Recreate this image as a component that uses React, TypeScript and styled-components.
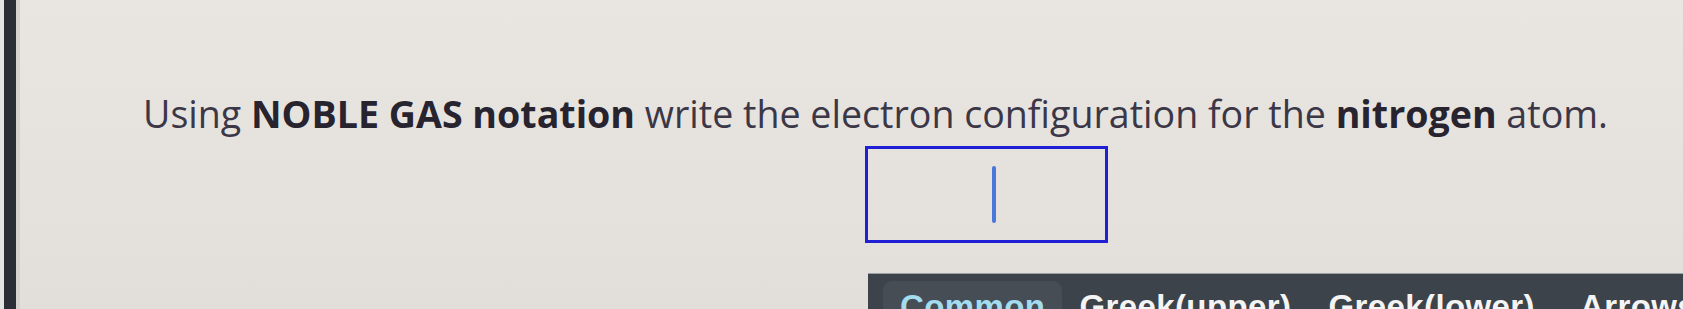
import React from "react";
import styled, { createGlobalStyle } from "styled-components";

const Global = createGlobalStyle`
  html, body { margin: 0; padding: 0; }
  body {
    width: 1683px;
    height: 309px;
    overflow: hidden;
    background: #e6e3df;
  }
`;

const Screen = styled.div`
  display: flex;
  width: 1683px;
  height: 309px;
  overflow: hidden;
`;

const Bezel = styled.div`
  flex: 0 0 20px;
  display: flex;
`;

const BezelEdge = styled.div<{ $w: number; $c: string }>`
  flex: 0 0 ${(p) => p.$w}px;
  background: ${(p) => p.$c};
`;

const Page = styled.main`
  flex: 1;
  display: flex;
  flex-direction: column;
  overflow: hidden;
  background: linear-gradient(180deg, #e9e6e2 0%, #e5e2de 60%, #e2dfdb 100%);
`;

const Question = styled.p`
  flex-shrink: 0;
  margin: 96px 0 0 123px;
  font-family: "Open Sans", "Noto Sans", sans-serif;
  font-size: 37.6px;
  line-height: 36px;
  color: #3b3747;
  white-space: nowrap;
`;

const Strong = styled.b`
  font-weight: 700;
  color: #27242f;
`;

const AnswerBox = styled.div`
  flex-shrink: 0;
  margin: 14px 0 0 845px;
  width: 243px;
  height: 97px;
  box-sizing: border-box;
  border: 3px solid #1f1fd6;
  display: flex;
  align-items: center;
  justify-content: center;
`;

const Caret = styled.div`
  width: 4px;
  height: 57px;
  border-radius: 2px;
  background: #4a78d8;
  margin-left: 14px;
`;

const Toolbar = styled.nav`
  flex-shrink: 0;
  margin: 30px 0 0 848px;
  height: 60px;
  background: #3d434a;
  border-top: 1px solid #9aa0a4;
  display: flex;
  align-items: flex-start;
  padding: 7px 0 0 15px;
`;

const Tab = styled.div<{ $active?: boolean; $gap?: number }>`
  flex-shrink: 0;
  padding: 8px 17px 0 17px;
  margin-right: ${(p) => p.$gap ?? 0}px;
  border-radius: 9px 9px 0 0;
  background: ${(p) => (p.$active ? "#474d55" : "transparent")};
  color: ${(p) => (p.$active ? "#a3dcef" : "#f4f4f4")};
  font-family: "Liberation Sans", Arial, sans-serif;
  font-weight: 700;
  font-size: 33px;
  letter-spacing: 0.4px;
  line-height: 36px;
  white-space: nowrap;
  height: 50px;
`;

export default function App() {
  return (
    <>
      <Global />
      <Screen>
        <Bezel>
          <BezelEdge $w={4} $c="#e4e4e2" />
          <BezelEdge $w={12} $c="#2c2e36" />
          <BezelEdge $w={4} $c="#d6d3cf" />
        </Bezel>
        <Page>
          <Question>
            Using <Strong>NOBLE GAS notation</Strong> write the electron configuration for the{" "}
            <Strong>nitrogen</Strong> atom.
          </Question>
          <AnswerBox>
            <Caret />
          </AnswerBox>
          <Toolbar>
            <Tab $active>Common</Tab>
            <Tab $gap={3}>Greek(upper)</Tab>
            <Tab $gap={11}>Greek(lower)</Tab>
            <Tab>Arrows</Tab>
          </Toolbar>
        </Page>
      </Screen>
    </>
  );
}
